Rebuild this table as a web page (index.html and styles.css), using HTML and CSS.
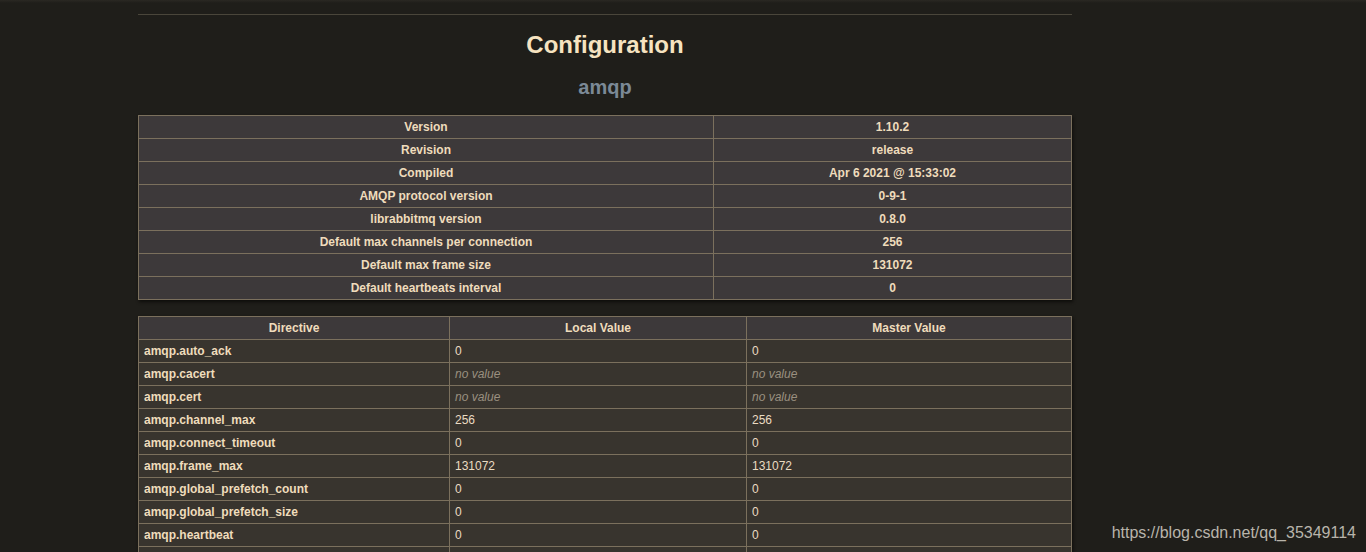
FILE: index.html
```html
<!DOCTYPE html>
<html>
<head>
<meta charset="utf-8">
<title>phpinfo()</title>
<link rel="stylesheet" href="styles.css">
</head>
<body>
<div class="page">
  <div class="center">
    <hr>
    <h1>Configuration</h1>
    <h2>amqp</h2>
    <table class="info">
      <tr><td class="h k">Version</td><td class="h">1.10.2</td></tr>
      <tr><td class="h k">Revision</td><td class="h">release</td></tr>
      <tr><td class="h k">Compiled</td><td class="h">Apr 6 2021 @ 15:33:02</td></tr>
      <tr><td class="h k">AMQP protocol version</td><td class="h">0-9-1</td></tr>
      <tr><td class="h k">librabbitmq version</td><td class="h">0.8.0</td></tr>
      <tr><td class="h k">Default max channels per connection</td><td class="h">256</td></tr>
      <tr><td class="h k">Default max frame size</td><td class="h">131072</td></tr>
      <tr><td class="h k">Default heartbeats interval</td><td class="h">0</td></tr>
    </table>
    <table class="dirs">
      <tr class="head"><th class="c1">Directive</th><th class="c2">Local Value</th><th class="c3">Master Value</th></tr>
      <tr><td class="e">amqp.auto_ack</td><td class="v">0</td><td class="v">0</td></tr>
      <tr><td class="e">amqp.cacert</td><td class="v"><i class="nv">no value</i></td><td class="v"><i class="nv">no value</i></td></tr>
      <tr><td class="e">amqp.cert</td><td class="v"><i class="nv">no value</i></td><td class="v"><i class="nv">no value</i></td></tr>
      <tr><td class="e">amqp.channel_max</td><td class="v">256</td><td class="v">256</td></tr>
      <tr><td class="e">amqp.connect_timeout</td><td class="v">0</td><td class="v">0</td></tr>
      <tr><td class="e">amqp.frame_max</td><td class="v">131072</td><td class="v">131072</td></tr>
      <tr><td class="e">amqp.global_prefetch_count</td><td class="v">0</td><td class="v">0</td></tr>
      <tr><td class="e">amqp.global_prefetch_size</td><td class="v">0</td><td class="v">0</td></tr>
      <tr><td class="e">amqp.heartbeat</td><td class="v">0</td><td class="v">0</td></tr>
      <tr><td class="e">amqp.host</td><td class="v">localhost</td><td class="v">localhost</td></tr>
    </table>
  </div>
  <div class="watermark">https://blog.csdn.net/qq_35349114</div>
</div>
</body>
</html>
```
FILE: styles.css
```css
html, body {
  margin: 0;
  padding: 0;
  background: #1f1e1a;
  overflow: hidden;
}
body {
  font-family: "Liberation Sans", Arial, sans-serif;
  color: #efdcbc;
}
.page {
  position: relative;
  height: 552px;
  background: linear-gradient(#2a2823, #1f1e1a 3px);
}
.center {
  width: 934px;
  margin: 0 auto 0 138px;
  padding-top: 14px;
}
hr {
  width: 934px;
  height: 1px;
  border: 0;
  margin: 0;
  background: #4a463b;
}
h1 {
  font-size: 24px;
  line-height: 28px;
  margin: 16px 0 17px;
  text-align: center;
  color: #f6e3c0;
}
h2 {
  font-size: 20px;
  line-height: 23px;
  margin: 0 0 16px;
  text-align: center;
  color: #7b8996;
}
table {
  width: 934px;
  border-collapse: collapse;
  box-shadow: 1px 2px 3px #0e0d0b;
  font-size: 12px;
}
td, th {
  border: 1px solid #7b705d;
  padding: 4px 5px;
  line-height: 14px;
  height: 14px;
}
.info {
  margin-bottom: 16px;
}
.info td.h {
  background: #3d393a;
  font-weight: bold;
  text-align: center;
  color: #efdcbc;
}
.info td.k {
  width: 564px;
}
.dirs th {
  background: #3d393a;
  font-weight: bold;
  text-align: center;
  color: #efdcbc;
}
.dirs .c1 { width: 300px; }
.dirs .c2 { width: 286px; }
.dirs td {
  background: #38342e;
}
.dirs td.e {
  font-weight: bold;
  color: #efdcbc;
}
.dirs td.v {
  color: #eadbc2;
}
.nv {
  color: #9a9080;
}
.watermark {
  position: absolute;
  right: 10px;
  top: 524px;
  font-size: 16px;
  color: #b8b4ab;
  font-family: "Liberation Sans", Arial, sans-serif;
}
```
